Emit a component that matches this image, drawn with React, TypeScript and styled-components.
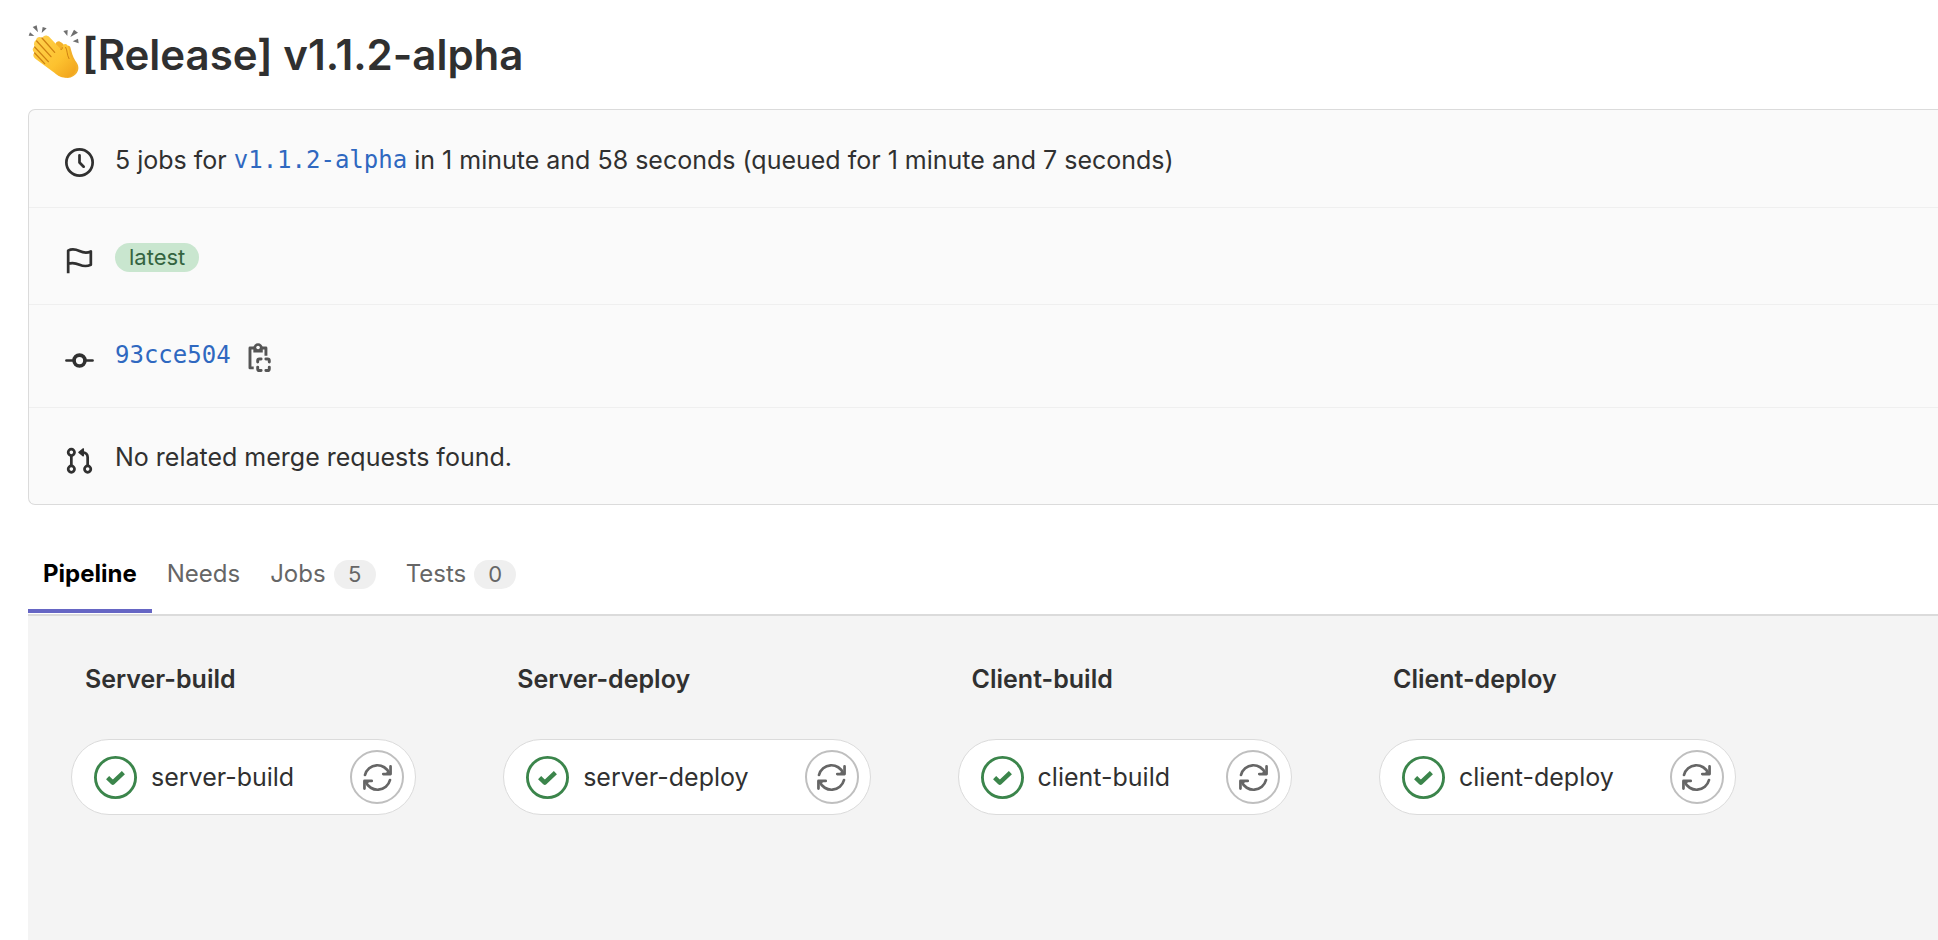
import React from "react";
import styled, { createGlobalStyle, css } from "styled-components";

const GlobalStyle = createGlobalStyle`
  * { box-sizing: border-box; }
  body {
    margin: 0;
    background: #fff;
    color: #303030;
    font-family: Inter, "Liberation Sans", sans-serif;
    font-size: 25px;
    line-height: 36px;
  }
`;

const Page = styled.main`
  display: flex;
  flex-direction: column;
  min-height: 100vh;
  padding-left: 28px;
`;

const Title = styled.h1`
  display: flex;
  align-items: center;
  gap: 2px;
  margin: 0;
  padding: 23px 0 30px;
  font-size: 42px;
  font-weight: 600;
  line-height: 48px;
`;

const TitleText = styled.span`
  padding-top: 8px;
`;

const InfoPanel = styled.section`
  background: #fafafa;
  border: 1px solid #dbdbdb;
  border-right: 0;
  border-radius: 7px 0 0 7px;
`;

const InfoRow = styled.div<{ $tall?: boolean }>`
  display: flex;
  align-items: center;
  gap: 21px;
  height: ${(p) => (p.$tall ? 103 : 97)}px;
  padding: 2px 0 0 36px;
  & + & { border-top: 1px solid #efefef; }
`;

const RowIcon = styled.svg`
  flex: none;
  width: 29px;
  height: 29px;
  margin-top: 6px;
  color: #303030;
`;

const RefLink = styled.a`
  color: #2f68c0;
  font-family: "DejaVu Sans Mono", monospace;
  font-size: 24px;
  vertical-align: 1px;
  text-decoration: none;
`;

const CommitRef = styled.div`
  display: flex;
  align-items: center;
  gap: 14px;
  padding-bottom: 4px;
`;

const LatestBadge = styled.span`
  padding: 0 14px;
  border-radius: 15px;
  background: #c9e6cf;
  color: #34643f;
  font-size: 22px;
  line-height: 29px;
`;

const CopyButton = styled.button`
  display: flex;
  margin: 0;
  padding: 4px 0 0;
  border: 0;
  background: none;
  color: #555;
`;

const Tabs = styled.nav`
  display: flex;
  margin-top: 34px;
  padding-bottom: 1px;
  border-bottom: 2px solid #dbdbdb;
  font-size: 24px;
`;

const Tab = styled.a<{ $active?: boolean }>`
  display: flex;
  align-items: center;
  gap: 8px;
  height: 74px;
  padding: 0 15px;
  border-bottom: 4px solid transparent;
  color: #666;
  text-decoration: none;
  ${(p) =>
    p.$active &&
    css`
      border-color: #6666c4;
      color: #000;
      font-weight: 700;
    `}
`;

const Count = styled.span`
  width: 42px;
  border-radius: 15px;
  background: #efefef;
  font-size: 22px;
  line-height: 29px;
  text-align: center;
`;

const Graph = styled.section`
  display: flex;
  flex: 1;
  gap: 87px;
  padding: 45px 43px;
  background: #f4f4f4;
`;

const StageTitle = styled.h2`
  margin: 0 0 42px;
  padding-left: 14px;
  font-size: 25px;
  font-weight: 600;
  line-height: 36px;
`;

const Job = styled.div`
  display: flex;
  align-items: center;
  height: 76px;
  padding: 0 11px 0 22px;
  border: 1px solid #dbdbdb;
  border-radius: 38px;
  background: #fff;
`;

const JobName = styled.span`
  margin: 0 56px 0 14px;
  white-space: nowrap;
`;

const RetryButton = styled.button`
  display: flex;
  align-items: center;
  justify-content: center;
  width: 54px;
  height: 54px;
  margin: 0;
  padding: 0;
  border: 2px solid #bfbfbf;
  border-radius: 50%;
  background: #fff;
  color: #666;
`;

const ClapIcon = () => (
  <svg width="52" height="55" viewBox="24 15 156 165" aria-label="clap" role="img">
    <defs>
      <linearGradient id="skin" x1="0" y1="0" x2="1" y2="1">
        <stop offset="0" stopColor="#ffd250" />
        <stop offset="0.6" stopColor="#fdc22f" />
        <stop offset="1" stopColor="#ef9f1a" />
      </linearGradient>
    </defs>
    <g fill="#6f6f6f">
      <path d="M38 24l12-5 4 21zM65 42l3-18 12 4zM26 50l4-10 13 11zM130 36l13-3-1 18zM151 54l11-22 12 9zM158 67l16-8 2 14z" />
    </g>
    <path
      d="M108 84c-5-10 3-20 12-16 8 3 12 10 17 17 4-6 12-6 14 0 4 14 7 28 15 40 8 10 12 20 7 32-5 12-18 20-30 20l-30-8z"
      fill="#f3b02a"
    />
    <path
      d="M48 63c2-9 11-12 19-6 3-9 14-10 21-3l34 36c3 2 5 0 5-4 0-10 9-15 15-8 6 8 4 20 9 32 4 12 20 22 17 40-3 15-17 26-32 26-14 0-25-8-36-17L46 119c-7-6-8-13-3-18-7-8-6-15 1-18-4-8-2-15 4-20z"
      fill="url(#skin)"
    />
    <g fill="none" stroke="#cf8212" strokeWidth="4" strokeLinecap="round">
      <path d="M66 57l38 43M50 66l43 47M44 84l41 44M44 102l30 32" />
      <path d="M122 91c3 2 5 0 5-5M137 85c6 10 3 22 10 34" strokeWidth="3" />
    </g>
  </svg>
);

const CheckIcon = () => (
  <svg width="43" height="43" viewBox="0 0 24 24" fill="none" stroke="#3b854b" aria-label="passed" role="img">
    <circle cx="12" cy="12" r="11.2" strokeWidth="1.6" />
    <path d="M7.6 12.1l2.9 2.8 5.9-5.6" strokeWidth="2.5" strokeLinejoin="round" />
  </svg>
);

const RetryIcon = () => (
  <svg width="29" height="29" viewBox="0 0 16 16" fill="none" stroke="currentColor" strokeWidth="1.5" aria-hidden="true">
    <path d="M1.1 6.6a7.05 7.05 0 0 1 13.4-.9M14.9 9.4a7.05 7.05 0 0 1-13.4.9" strokeLinecap="round" />
    <path d="M15.2 1.9v4.2h-4M.8 14.1V9.9h4" strokeLinecap="round" strokeLinejoin="round" />
    <path d="M15.2 6.1h-3.4l2-1.6zM.8 9.9h3.4l-2 1.6z" fill="currentColor" stroke="none" />
  </svg>
);

const stroke = { viewBox: "0 0 16 16", fill: "none", stroke: "currentColor", strokeWidth: 1.5, "aria-hidden": true } as const;

const ClockIcon = () => (
  <RowIcon {...stroke}>
    <circle cx="8" cy="8" r="7.25" />
    <path d="M8 4v4l2.3 2.3" strokeLinecap="round" strokeLinejoin="round" />
  </RowIcon>
);

const FlagIcon = () => (
  <RowIcon {...stroke}>
    <path
      d="M1.75 15V2.6C4 1.3 6 1.9 8 2.8s4 1.3 6.25.2v7.3c-2.2 1.1-4.2.9-6.25 0s-4-1.3-6.25-.5"
      strokeLinejoin="round"
    />
  </RowIcon>
);

const CommitIcon = () => (
  <RowIcon {...stroke}>
    <circle cx="8" cy="8" r="3" strokeWidth="2" />
    <path d="M.8 8H4.6M11.4 8h3.8" strokeLinecap="round" />
  </RowIcon>
);

const MergeIcon = () => (
  <RowIcon {...stroke}>
    <circle cx="3.5" cy="3.5" r="1.75" />
    <circle cx="3.5" cy="12.75" r="1.75" />
    <circle cx="12.5" cy="12.75" r="1.75" />
    <path d="M3.5 5.3v5.6M12.5 10.9V6.2c0-1.7-1-2.7-3-2.7" />
    <path d="M10 1.7v3.6L7.8 3.5z" fill="currentColor" strokeWidth="1" strokeLinejoin="round" />
  </RowIcon>
);

const CopyIcon = () => (
  <svg {...stroke} width="29" height="29">
    <path d="M4.8 13.75H2.75v-11h8.8v4.3" strokeWidth="1.6" strokeLinejoin="round" />
    <path d="M4.6 5.2V2.8A2.6 2.6 0 0 1 9.8 2.8v2.4z" fill="currentColor" stroke="none" />
    <circle cx="7.2" cy="2.5" r="1" fill="#fafafa" stroke="none" />
    <path
      d="M7 10.5v-.8q0-.9.9-.9h1M11.5 8.8h1q.9 0 .9.9v.8M13.4 13.3v1q0 .9-.9.9h-1M8.9 15.2h-1q-.9 0-.9-.9v-1"
      strokeWidth="1.6"
      strokeLinecap="round"
    />
  </svg>
);

const jobs = ["server-build", "server-deploy", "client-build", "client-deploy"];

export default function App() {
  return (
    <>
      <GlobalStyle />
      <Page>
        <Title>
          <ClapIcon />
          <TitleText>[Release] v1.1.2-alpha</TitleText>
        </Title>
        <InfoPanel>
          <InfoRow>
            <ClockIcon />
            <span>
              5 jobs for <RefLink href="#ref">v1.1.2-alpha</RefLink> in 1 minute and 58 seconds (queued for 1 minute and 7 seconds)
            </span>
          </InfoRow>
          <InfoRow>
            <FlagIcon />
            <LatestBadge>latest</LatestBadge>
          </InfoRow>
          <InfoRow $tall>
            <CommitIcon />
            <CommitRef>
              <RefLink href="#commit">93cce504</RefLink>
              <CopyButton aria-label="Copy commit SHA">
                <CopyIcon />
              </CopyButton>
            </CommitRef>
          </InfoRow>
          <InfoRow>
            <MergeIcon />
            <span>No related merge requests found.</span>
          </InfoRow>
        </InfoPanel>
        <Tabs>
          <Tab href="#pipeline" $active>Pipeline</Tab>
          <Tab href="#needs">Needs</Tab>
          <Tab href="#jobs">Jobs <Count>5</Count></Tab>
          <Tab href="#tests">Tests <Count>0</Count></Tab>
        </Tabs>
        <Graph>
          {jobs.map((name) => (
            <div key={name}>
              <StageTitle>{name[0].toUpperCase() + name.slice(1)}</StageTitle>
              <Job>
                <CheckIcon />
                <JobName>{name}</JobName>
                <RetryButton aria-label={`Retry ${name}`}>
                  <RetryIcon />
                </RetryButton>
              </Job>
            </div>
          ))}
        </Graph>
      </Page>
    </>
  );
}
